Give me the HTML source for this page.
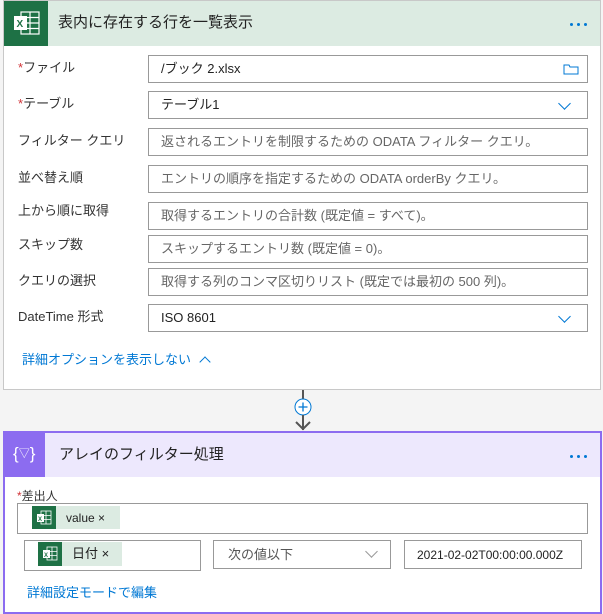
<!DOCTYPE html><html><head><meta charset="utf-8"><style>
body{margin:0;width:603px;height:614px;background:#f4f4f4;font-family:"Liberation Sans","Noto Sans CJK JP",sans-serif;position:relative;overflow:hidden;color:#222}
.a{position:absolute;box-sizing:border-box;line-height:16px}
.lbl{font-size:13px;color:#333;left:18px}
.inp{left:148px;width:440px;height:28px;border:1px solid #999;background:#fff;font-size:13px;padding:0 0 0 12px;line-height:26px;color:#222}
.ph{color:#666}
.st{color:#d13438}
.chev{position:absolute;right:18px;top:7px;width:8px;height:8px;border-right:1.5px solid #0078d4;border-bottom:1.5px solid #0078d4;transform:rotate(45deg)}
.dots{position:absolute;display:flex;gap:4px}
.dots i{width:3px;height:3px;border-radius:50%;background:#0078d4;display:block}
</style></head><body>
<div class="a" style="left:3px;top:0;width:598px;height:390px;background:#fff;border:1px solid #c8c8c8"></div>
<div class="a" style="left:4px;top:1px;width:596px;height:45px;background:#dcebe2"></div>
<div class="a" style="left:4px;top:1px;width:44px;height:45px;background:#1e7145"></div>
<svg class="a" style="left:12px;top:11px" width="28" height="24"><rect x="9" y="1" width="18" height="22" fill="none" stroke="#fff" stroke-width="1.2"/><path d="M9 6.5h18M9 12h18M9 17.5h18M18 1v22" stroke="#fff" stroke-width="1.2"/><rect x="2" y="5" width="13" height="14" fill="#fff"/><text x="4.5" y="16" font-size="10" font-weight="bold" fill="#1e7145" font-family="Liberation Sans">X</text></svg>
<div class="a" style="left:58px;top:15px;font-size:15px;color:#222">表内に存在する行を一覧表示</div>
<div class="dots" style="left:570px;top:23px"><i></i><i></i><i></i></div>
<div class="a lbl" style="top:60px"><span class="st">*</span>ファイル</div>
<div class="a inp" style="top:55px">/ブック 2.xlsx<svg style="position:absolute;right:8px;top:7px" width="16" height="12"><path d="M1 2h5l1 2h8v7H1z" fill="none" stroke="#0078d4"/></svg></div>
<div class="a lbl" style="top:96px"><span class="st">*</span>テーブル</div>
<div class="a inp" style="top:91px">テーブル1<span class="chev"></span></div>
<div class="a lbl" style="top:133px">フィルター クエリ</div>
<div class="a inp ph" style="top:128px">返されるエントリを制限するための ODATA フィルター クエリ。</div>
<div class="a lbl" style="top:170px">並べ替え順</div>
<div class="a inp ph" style="top:165px">エントリの順序を指定するための ODATA orderBy クエリ。</div>
<div class="a lbl" style="top:203px">上から順に取得</div>
<div class="a inp ph" style="top:202px">取得するエントリの合計数 (既定値 = すべて)。</div>
<div class="a lbl" style="top:237px">スキップ数</div>
<div class="a inp ph" style="top:235px">スキップするエントリ数 (既定値 = 0)。</div>
<div class="a lbl" style="top:273px">クエリの選択</div>
<div class="a inp ph" style="top:268px">取得する列のコンマ区切りリスト (既定では最初の 500 列)。</div>
<div class="a lbl" style="top:309px">DateTime 形式</div>
<div class="a inp" style="top:304px">ISO 8601<span class="chev"></span></div>
<div class="a" style="left:22px;top:352px;font-size:13px;color:#0078d4">詳細オプションを表示しない <span style="display:inline-block;width:7px;height:7px;border-left:1.5px solid #0078d4;border-top:1.5px solid #0078d4;transform:rotate(45deg);margin-left:6px;position:relative;top:2px"></span></div>
<div class="a" style="left:302px;top:390px;width:2px;height:9px;background:#555"></div>
<svg class="a" style="left:292px;top:397px" width="22" height="34"><circle cx="11" cy="10" r="8" fill="#fff" stroke="#0078d4"/><path d="M11 5.5v9M6.5 10h9" stroke="#0078d4" stroke-width="1.3"/><path d="M11 18v15M4 25l7 7 7-7" fill="none" stroke="#555" stroke-width="2"/></svg>
<div class="a" style="left:3px;top:431px;width:599px;height:183px;background:#fff;border:2px solid #8c6cf0"></div>
<div class="a" style="left:5px;top:433px;width:595px;height:44px;background:#ede8fd"></div>
<div class="a" style="left:5px;top:433px;width:40px;height:44px;background:#8c6cf0"></div>
<div class="a" style="left:13px;top:446px;color:#fff;font-size:17px">{<span style="font-size:11px;position:relative;top:-2px">▽</span>}</div>
<div class="a" style="left:59px;top:447px;font-size:15px;color:#222">アレイのフィルター処理</div>
<div class="dots" style="left:570px;top:455px"><i></i><i></i><i></i></div>
<div class="a" style="left:17px;top:488px;font-size:12px;color:#333"><span class="st">*</span>差出人</div>
<div class="a" style="left:17px;top:503px;width:571px;height:31px;border:1px solid #999;background:#fff"></div>
<div class="a" style="left:32px;top:506px;width:88px;height:23px;background:#dcebe2;font-size:12px;padding:4px 0 0 34px">value ×</div>
<div class="a" style="left:32px;top:506px;width:24px;height:23px;background:#1e7145"><svg width="24" height="23"><rect x="9" y="5" width="10" height="13" fill="none" stroke="#fff" stroke-width=".8"/><path d="M9 9.5h10M9 13.5h10M14 5v13" stroke="#fff" stroke-width=".8"/><rect x="5" y="8" width="7" height="8" fill="#fff"/><text x="6" y="15" font-size="6" font-weight="bold" fill="#1e7145">X</text></svg></div>
<div class="a" style="left:24px;top:540px;width:177px;height:31px;border:1px solid #999;background:#fff"></div>
<div class="a" style="left:38px;top:542px;width:84px;height:24px;background:#dcebe2;font-size:13px;padding:4px 0 0 34px">日付 ×</div>
<div class="a" style="left:38px;top:542px;width:24px;height:24px;background:#1e7145"><svg width="24" height="24"><rect x="9" y="5" width="10" height="13" fill="none" stroke="#fff" stroke-width=".8"/><path d="M9 9.5h10M9 13.5h10M14 5v13" stroke="#fff" stroke-width=".8"/><rect x="5" y="8" width="7" height="8" fill="#fff"/><text x="6" y="15" font-size="6" font-weight="bold" fill="#1e7145">X</text></svg></div>
<div class="a" style="left:213px;top:540px;width:178px;height:29px;border:1px solid #999;background:#fff;font-size:13px;color:#555;padding:6px 0 0 14px">次の値以下<span class="chev" style="border-color:#999;right:14px;top:6px"></span></div>
<div class="a" style="left:404px;top:540px;width:178px;height:29px;border:1px solid #999;background:#fff;font-size:12px;padding:6px 0 0 12px">2021-02-02T00:00:00.000Z</div>
<div class="a" style="left:27px;top:585px;font-size:13px;color:#0078d4">詳細設定モードで編集</div>
</body></html>
